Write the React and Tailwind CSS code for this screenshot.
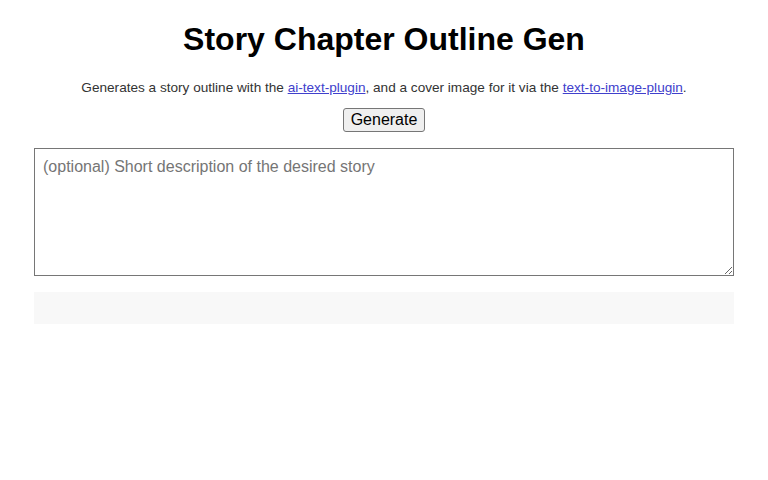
export default function App() {
  return (
    <div className="min-h-[480px] bg-white font-['Liberation_Sans',Arial,sans-serif]">
      <div className="mx-auto w-[700px]">
        <h1 className="pt-[21px] text-center text-[32px] font-bold leading-[37px] text-black">
          Story Chapter Outline Gen
        </h1>
        <p className="mt-[22px] text-center text-[13.6px] leading-[15px] text-[#333]">
          Generates a story outline with the{" "}
          <a href="#" className="text-[#4040cc] underline">ai-text-plugin</a>, and a cover image for it via the{" "}
          <a href="#" className="text-[#4040cc] underline">text-to-image-plugin</a>.
        </p>
        <div className="mt-[13px] flex justify-center">
          <button className="h-[24px] rounded-[3px] border border-[#767676] bg-[#efefef] px-[7px] text-[16px] leading-[18px] text-black">
            Generate
          </button>
        </div>
        <textarea
          className="mt-[16px] block h-[128px] w-full resize-y border border-[#767676] px-[8px] pt-[8px] pb-[6px] text-[16px] leading-[20px] text-black placeholder:text-[#757575] outline-none"
          placeholder="(optional) Short description of the desired story"
        />
        <div className="mt-[16px] h-[32px] w-full bg-[#f8f8f8]"></div>
      </div>
    </div>
  );
}
